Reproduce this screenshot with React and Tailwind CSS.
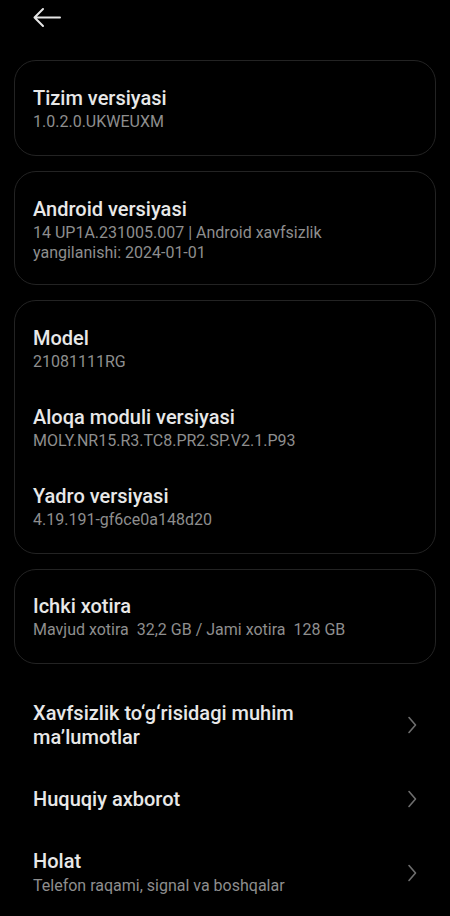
import React from "react";

const font = { fontFamily: "Roboto, 'Noto Sans', sans-serif" };

function Item({ title, sub }) {
  return (
    <div className="flex flex-col">
      <div className="text-[20px] leading-[24px] font-medium text-[#e8e8e8]">{title}</div>
      <div className="text-[16px] leading-[20px] text-[#8e8e8e] mt-[2px]">{sub}</div>
    </div>
  );
}

function Card({ children, className = "" }) {
  return (
    <div className={"rounded-[22px] border border-[#232323] bg-black px-[18px] " + className}>
      {children}
    </div>
  );
}

function Chevron() {
  return (
    <svg width="10" height="18" viewBox="0 0 10 18" className="shrink-0">
      <path d="M2 1.5 L8.5 9 L2 16.5" fill="none" stroke="#6e6e6e" strokeWidth="1.6" strokeLinecap="round" strokeLinejoin="round" />
    </svg>
  );
}

function Row({ title, sub }) {
  return (
    <div className="flex items-center justify-between pl-[33px] pr-[33px]">
      <div className="flex flex-col">
        <div className="text-[20px] leading-[24px] font-medium text-[#e8e8e8]">{title}</div>
        {sub && <div className="text-[16px] leading-[20px] text-[#8e8e8e] mt-[3px]">{sub}</div>}
      </div>
      <Chevron />
    </div>
  );
}

export default function App() {
  return (
    <div className="w-[450px] h-[916px] bg-black overflow-hidden" style={font}>
      <div className="h-[60px] pl-[32px] pt-[7px]">
        <svg width="30" height="22" viewBox="0 0 30 22">
          <path d="M28 10.5 H2.5 M11 2 L2.5 10.5 L11 19" fill="none" stroke="#e6e6e6" strokeWidth="2" strokeLinecap="round" strokeLinejoin="round" />
        </svg>
      </div>
      <div className="flex flex-col gap-[15px] px-[14px]">
        <Card className="pt-[25px] pb-[23px]">
          <Item title="Tizim versiyasi" sub="1.0.2.0.UKWEUXM" />
        </Card>
        <Card className="pt-[25px] pb-[21px]">
          <Item title="Android versiyasi" sub={<>14 UP1A.231005.007 | Android xavfsizlik<br />yangilanishi: 2024-01-01</>} />
        </Card>
        <Card className="pt-[25px] pb-[23px] flex flex-col gap-[33px]">
          <Item title="Model" sub="21081111RG" />
          <Item title="Aloqa moduli versiyasi" sub="MOLY.NR15.R3.TC8.PR2.SP.V2.1.P93" />
          <Item title="Yadro versiyasi" sub="4.19.191-gf6ce0a148d20" />
        </Card>
        <Card className="pt-[24px] pb-[23px]">
          <Item title="Ichki xotira" sub={<>Mavjud xotira&nbsp; 32,2 GB / Jami xotira&nbsp; 128 GB</>} />
        </Card>
      </div>
      <div className="flex flex-col gap-[38px] pt-[37px]">
        <Row title={<>Xavfsizlik to‘g‘risidagi muhim<br />ma’lumotlar</>} />
        <Row title="Huquqiy axborot" />
        <Row title="Holat" sub="Telefon raqami, signal va boshqalar" />
      </div>
    </div>
  );
}
